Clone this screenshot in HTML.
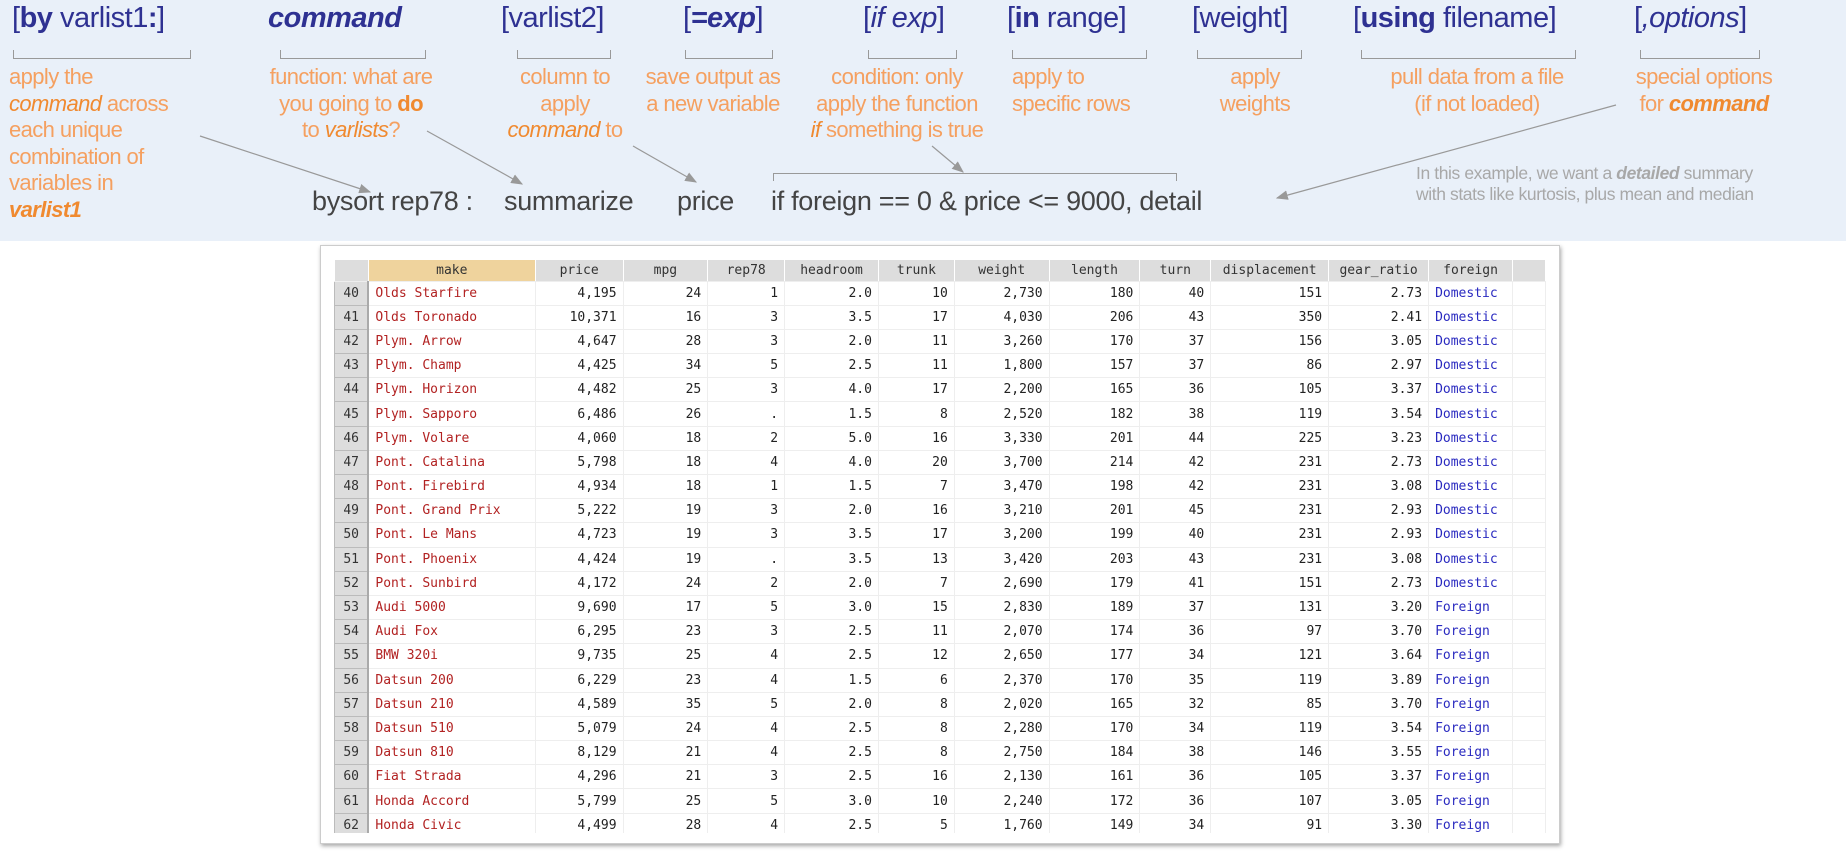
<!DOCTYPE html>
<html><head><meta charset="utf-8">
<style>
*{margin:0;padding:0;box-sizing:border-box}
body{width:1846px;height:860px;background:#fff;position:relative;overflow:hidden;font-family:"Liberation Sans",sans-serif}
#banner{position:absolute;left:0;top:0;width:1846px;height:241px;background:#e9f0f9}
.h{position:absolute;top:2px;font-size:29px;color:#2e3192;white-space:nowrap;letter-spacing:-0.5px}
.br{position:absolute;top:50px;height:9px;border:1px solid #999;border-top:none}
.o{position:absolute;top:64px;font-size:22px;line-height:26.5px;color:#f5a060;white-space:nowrap;letter-spacing:-0.6px}
.c{text-align:center}
.o b,.o i{color:#f08a30}
.cmd{position:absolute;top:186px;font-size:27px;color:#444;white-space:nowrap;letter-spacing:-0.3px}
.note{position:absolute;left:1416px;top:163px;font-size:17.5px;line-height:21px;color:#a8a8a8;white-space:nowrap;letter-spacing:-0.4px}
#win{position:absolute;left:320px;top:245px;width:1240px;height:599px;background:#fff;border:1px solid #ccc;box-shadow:1px 2px 4px rgba(0,0,0,.35)}
#tbl{position:absolute;left:13px;top:14px;width:1212px;height:573px;overflow:hidden;font-family:"DejaVu Sans Mono","Liberation Mono",monospace;font-size:13px}
table{border-collapse:collapse;table-layout:fixed}
td,th{height:24.2px;padding:0 6px;white-space:nowrap;border-right:1px solid #eee;border-bottom:1px solid #eee}
th{background:#ddd;font-weight:normal;color:#333;text-align:center;height:21px;border-right:1px solid #fff}
th.mk{background:#efd39d}
td{text-align:right;color:#222}
td.n{background:#ddd;border:1px solid #bbb;border-right:2px solid #aaa;text-align:center;color:#333;padding:0}
td.m{text-align:left;color:#b22222}
td.f{text-align:left;color:#2a2ac0}
</style></head><body>
<div id="banner">
<div class="h" style="left:12px">[<b>by</b> varlist1<b>:</b>]</div>
<div class="h" style="left:268px"><b><i style="font-weight:600">command</i></b></div>
<div class="h" style="left:501px">[varlist2]</div>
<div class="h" style="left:683px">[<i><b style="font-weight:600">=exp</b></i>]</div>
<div class="h" style="left:863px">[<i>if exp</i>]</div>
<div class="h" style="left:1007px">[<b>in</b> range]</div>
<div class="h" style="left:1192px">[weight]</div>
<div class="h" style="left:1353px">[<b>using</b> filename]</div>
<div class="h" style="left:1634px">[<i>,options</i>]</div>

<div class="br" style="left:13px;width:178px"></div>
<div class="br" style="left:280px;width:146px"></div>
<div class="br" style="left:517px;width:94px"></div>
<div class="br" style="left:685px;width:88px"></div>
<div class="br" style="left:868px;width:89px"></div>
<div class="br" style="left:1012px;width:135px"></div>
<div class="br" style="left:1197px;width:105px"></div>
<div class="br" style="left:1361px;width:215px"></div>
<div class="br" style="left:1640px;width:120px"></div>

<div class="o" style="left:9px">apply the<br><i><b style="font-weight:normal">command</b></i> across<br>each unique<br>combination of<br>variables in<br><i><b>varlist1</b></i></div>
<div class="o c" style="left:251px;width:200px">function: what are<br>you going to <b>do</b><br>to <i>varlists</i>?</div>
<div class="o c" style="left:485px;width:160px">column to<br>apply<br><i>command</i> to</div>
<div class="o c" style="left:628px;width:170px">save output as<br>a new variable</div>
<div class="o c" style="left:802px;width:190px">condition: only<br>apply the function<br><i>if</i> something is true</div>
<div class="o" style="left:1012px">apply to<br>specific rows</div>
<div class="o c" style="left:1185px;width:140px">apply<br>weights</div>
<div class="o c" style="left:1372px;width:210px">pull data from a file<br>(if not loaded)</div>
<div class="o c" style="left:1614px;width:180px">special options<br>for <i><b>command</b></i></div>

<div class="cmd" style="left:312px">bysort rep78 :</div>
<div class="cmd" style="left:504px">summarize</div>
<div class="cmd" style="left:677px">price</div>
<div class="cmd" style="left:771px">if foreign == 0 &amp; price &lt;= 9000, detail</div>
<div class="br" style="left:773px;top:173px;width:404px;height:8px;border:1px solid #999;border-bottom:none"></div>
<div class="note">In this example, we want a <b><i>detailed</i></b> summary<br>with stats like kurtosis, plus mean and median</div>

<svg width="1846" height="241" style="position:absolute;left:0;top:0">
<defs><marker id="a" markerWidth="10" markerHeight="8" refX="9" refY="4" orient="auto"><path d="M0,0 L10,4 L0,8 Z" fill="#999"/></marker></defs>
<g stroke="#999" stroke-width="1.2" fill="none" marker-end="url(#a)">
<line x1="200" y1="136" x2="370" y2="192"/>
<line x1="427" y1="131" x2="522" y2="184"/>
<line x1="633" y1="146" x2="696" y2="182"/>
<line x1="932" y1="146" x2="963" y2="172"/>
<line x1="1616" y1="105" x2="1277" y2="198"/>
</g></svg>
</div>

<div id="win"><div id="tbl">
<table>
<colgroup><col style="width:34px"><col style="width:167px"><col style="width:88px"><col style="width:85px"><col style="width:77px"><col style="width:94px"><col style="width:76px"><col style="width:95px"><col style="width:91px"><col style="width:71px"><col style="width:118px"><col style="width:100px"><col style="width:84px"><col style="width:33px"></colgroup>
<tr><th></th><th class="mk">make</th><th>price</th><th>mpg</th><th>rep78</th><th>headroom</th><th>trunk</th><th>weight</th><th>length</th><th>turn</th><th>displacement</th><th>gear_ratio</th><th>foreign</th><th></th></tr>
<tr><td class="n">40</td><td class="m">Olds Starfire</td><td>4,195</td><td>24</td><td>1</td><td>2.0</td><td>10</td><td>2,730</td><td>180</td><td>40</td><td>151</td><td>2.73</td><td class="f">Domestic</td><td></td></tr>
<tr><td class="n">41</td><td class="m">Olds Toronado</td><td>10,371</td><td>16</td><td>3</td><td>3.5</td><td>17</td><td>4,030</td><td>206</td><td>43</td><td>350</td><td>2.41</td><td class="f">Domestic</td><td></td></tr>
<tr><td class="n">42</td><td class="m">Plym. Arrow</td><td>4,647</td><td>28</td><td>3</td><td>2.0</td><td>11</td><td>3,260</td><td>170</td><td>37</td><td>156</td><td>3.05</td><td class="f">Domestic</td><td></td></tr>
<tr><td class="n">43</td><td class="m">Plym. Champ</td><td>4,425</td><td>34</td><td>5</td><td>2.5</td><td>11</td><td>1,800</td><td>157</td><td>37</td><td>86</td><td>2.97</td><td class="f">Domestic</td><td></td></tr>
<tr><td class="n">44</td><td class="m">Plym. Horizon</td><td>4,482</td><td>25</td><td>3</td><td>4.0</td><td>17</td><td>2,200</td><td>165</td><td>36</td><td>105</td><td>3.37</td><td class="f">Domestic</td><td></td></tr>
<tr><td class="n">45</td><td class="m">Plym. Sapporo</td><td>6,486</td><td>26</td><td>.</td><td>1.5</td><td>8</td><td>2,520</td><td>182</td><td>38</td><td>119</td><td>3.54</td><td class="f">Domestic</td><td></td></tr>
<tr><td class="n">46</td><td class="m">Plym. Volare</td><td>4,060</td><td>18</td><td>2</td><td>5.0</td><td>16</td><td>3,330</td><td>201</td><td>44</td><td>225</td><td>3.23</td><td class="f">Domestic</td><td></td></tr>
<tr><td class="n">47</td><td class="m">Pont. Catalina</td><td>5,798</td><td>18</td><td>4</td><td>4.0</td><td>20</td><td>3,700</td><td>214</td><td>42</td><td>231</td><td>2.73</td><td class="f">Domestic</td><td></td></tr>
<tr><td class="n">48</td><td class="m">Pont. Firebird</td><td>4,934</td><td>18</td><td>1</td><td>1.5</td><td>7</td><td>3,470</td><td>198</td><td>42</td><td>231</td><td>3.08</td><td class="f">Domestic</td><td></td></tr>
<tr><td class="n">49</td><td class="m">Pont. Grand Prix</td><td>5,222</td><td>19</td><td>3</td><td>2.0</td><td>16</td><td>3,210</td><td>201</td><td>45</td><td>231</td><td>2.93</td><td class="f">Domestic</td><td></td></tr>
<tr><td class="n">50</td><td class="m">Pont. Le Mans</td><td>4,723</td><td>19</td><td>3</td><td>3.5</td><td>17</td><td>3,200</td><td>199</td><td>40</td><td>231</td><td>2.93</td><td class="f">Domestic</td><td></td></tr>
<tr><td class="n">51</td><td class="m">Pont. Phoenix</td><td>4,424</td><td>19</td><td>.</td><td>3.5</td><td>13</td><td>3,420</td><td>203</td><td>43</td><td>231</td><td>3.08</td><td class="f">Domestic</td><td></td></tr>
<tr><td class="n">52</td><td class="m">Pont. Sunbird</td><td>4,172</td><td>24</td><td>2</td><td>2.0</td><td>7</td><td>2,690</td><td>179</td><td>41</td><td>151</td><td>2.73</td><td class="f">Domestic</td><td></td></tr>
<tr><td class="n">53</td><td class="m">Audi 5000</td><td>9,690</td><td>17</td><td>5</td><td>3.0</td><td>15</td><td>2,830</td><td>189</td><td>37</td><td>131</td><td>3.20</td><td class="f">Foreign</td><td></td></tr>
<tr><td class="n">54</td><td class="m">Audi Fox</td><td>6,295</td><td>23</td><td>3</td><td>2.5</td><td>11</td><td>2,070</td><td>174</td><td>36</td><td>97</td><td>3.70</td><td class="f">Foreign</td><td></td></tr>
<tr><td class="n">55</td><td class="m">BMW 320i</td><td>9,735</td><td>25</td><td>4</td><td>2.5</td><td>12</td><td>2,650</td><td>177</td><td>34</td><td>121</td><td>3.64</td><td class="f">Foreign</td><td></td></tr>
<tr><td class="n">56</td><td class="m">Datsun 200</td><td>6,229</td><td>23</td><td>4</td><td>1.5</td><td>6</td><td>2,370</td><td>170</td><td>35</td><td>119</td><td>3.89</td><td class="f">Foreign</td><td></td></tr>
<tr><td class="n">57</td><td class="m">Datsun 210</td><td>4,589</td><td>35</td><td>5</td><td>2.0</td><td>8</td><td>2,020</td><td>165</td><td>32</td><td>85</td><td>3.70</td><td class="f">Foreign</td><td></td></tr>
<tr><td class="n">58</td><td class="m">Datsun 510</td><td>5,079</td><td>24</td><td>4</td><td>2.5</td><td>8</td><td>2,280</td><td>170</td><td>34</td><td>119</td><td>3.54</td><td class="f">Foreign</td><td></td></tr>
<tr><td class="n">59</td><td class="m">Datsun 810</td><td>8,129</td><td>21</td><td>4</td><td>2.5</td><td>8</td><td>2,750</td><td>184</td><td>38</td><td>146</td><td>3.55</td><td class="f">Foreign</td><td></td></tr>
<tr><td class="n">60</td><td class="m">Fiat Strada</td><td>4,296</td><td>21</td><td>3</td><td>2.5</td><td>16</td><td>2,130</td><td>161</td><td>36</td><td>105</td><td>3.37</td><td class="f">Foreign</td><td></td></tr>
<tr><td class="n">61</td><td class="m">Honda Accord</td><td>5,799</td><td>25</td><td>5</td><td>3.0</td><td>10</td><td>2,240</td><td>172</td><td>36</td><td>107</td><td>3.05</td><td class="f">Foreign</td><td></td></tr>
<tr><td class="n">62</td><td class="m">Honda Civic</td><td>4,499</td><td>28</td><td>4</td><td>2.5</td><td>5</td><td>1,760</td><td>149</td><td>34</td><td>91</td><td>3.30</td><td class="f">Foreign</td><td></td></tr>
</table>
</div></div>
</body></html>
